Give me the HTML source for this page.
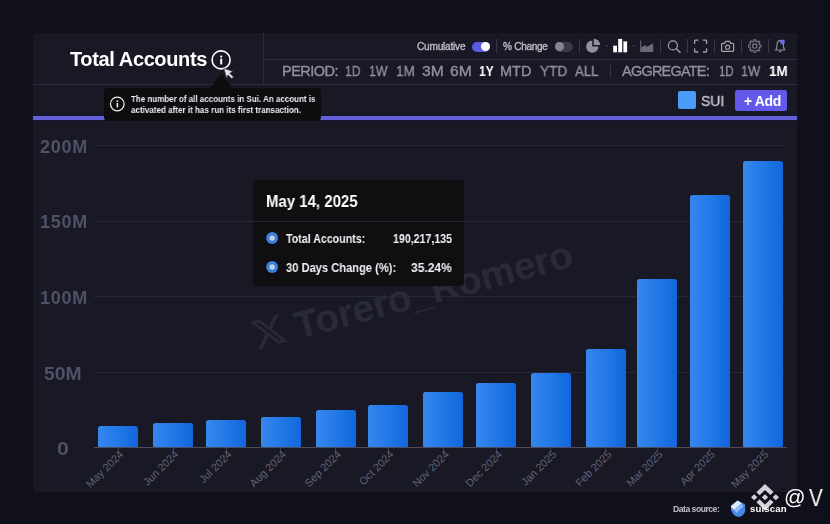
<!DOCTYPE html>
<html><head><meta charset="utf-8">
<style>
*{margin:0;padding:0;box-sizing:border-box}
html,body{width:830px;height:524px;overflow:hidden;background:#10101a;font-family:"Liberation Sans",sans-serif}
.abs{position:absolute}
#panel{position:absolute;left:33px;top:33px;width:764px;height:459px;background:#191925;border-radius:3px}
.hl{position:absolute;height:1px;background:#2b2b3a}
.vl{position:absolute;width:1px;background:#2b2b3a}
.t{position:absolute;white-space:nowrap;line-height:1;transform-origin:0 0;will-change:transform}
.grid{position:absolute;left:94px;width:691px;height:1px;background:#27273a}
.bar{position:absolute;width:40px;border-radius:2.5px 2.5px 1px 1px;background:linear-gradient(90deg,#3787ed 0%,#2077e6 55%,#1166dc 100%)}
.xl{position:absolute;font-size:10.8px;color:#626278;white-space:nowrap;line-height:1;transform-origin:100% 50%;transform:rotate(-45deg)}
.sep{position:absolute;top:39px;width:1px;height:14px;background:#383848}
.dot{position:absolute;width:11.5px;height:11.5px;border-radius:50%;background:#3a76d6}
.dot i{position:absolute;left:3px;top:3px;width:5.5px;height:5.5px;border-radius:50%;background:#c4d6f2}
</style></head><body>
<div id="panel"></div>

<!-- header lines -->
<div class="hl" style="left:33px;top:84px;width:764px"></div>
<div class="hl" style="left:263px;top:59px;width:534px"></div>
<div class="vl" style="left:263px;top:33px;height:51px"></div>

<!-- info icon + cursor -->
<svg class="abs" style="left:208px;top:47px" width="30" height="34" viewBox="208 47 30 34">
  <circle cx="221.1" cy="59.9" r="9" fill="none" stroke="#fff" stroke-width="1.6"/>
  <rect x="220.2" y="58.7" width="2" height="5.7" fill="#fff"/>
  <circle cx="221.2" cy="56.6" r="1.15" fill="#fff"/>
  <path d="M224 68.4 L232.6 71.6 L229.6 73.2 L233.4 77 L231.8 78.6 L228 74.8 L226.6 77.6 Z" fill="#e8e8ec" stroke="#55555f" stroke-width="0.6" stroke-linejoin="round"/>
</svg>

<!-- toolbar row 1 -->
<div class="abs" style="left:472px;top:41.5px;width:18px;height:10px;border-radius:5px;background:#5a5ae4"></div>
<div class="abs" style="left:480.5px;top:42px;width:9px;height:9px;border-radius:50%;background:#fff"></div>
<div class="sep" style="left:496px"></div>
<div class="abs" style="left:555px;top:41.5px;width:18px;height:10px;border-radius:5px;background:#383846"></div>
<div class="abs" style="left:555px;top:42px;width:9px;height:9px;border-radius:50%;background:#868692"></div>
<div class="sep" style="left:579px"></div>
<svg class="abs" style="left:584px;top:36px" width="210" height="20" viewBox="584 36 210 20">
  <!-- pie -->
  <path d="M592.3 40.4 A6.2 6.2 0 1 0 598.5 46.6 L592.3 46.6 Z" fill="#92929e"/>
  <path d="M593.8 38.8 A6.2 6.2 0 0 1 600 45 L593.8 45 Z" fill="#92929e"/>
  <!-- bars -->
  <rect x="613.2" y="45.7" width="3.8" height="6.6" fill="#fff"/>
  <rect x="618.2" y="38.9" width="4" height="13.4" fill="#fff"/>
  <rect x="623.4" y="41.4" width="3.7" height="10.9" fill="#fff"/>
  <circle cx="606.8" cy="46" r="0.7" fill="#555564"/><circle cx="633.6" cy="46" r="0.7" fill="#555564"/>
  <!-- area -->
  <rect x="640.2" y="40.6" width="1" height="11.6" fill="#6e6e7c"/>
  <path d="M641.2 52.1 L641.2 47.6 L645 45.3 L647 46.7 L653.2 43.2 L653.2 52.1 Z" fill="#6a6a78"/>
  <!-- search -->
  <circle cx="672.9" cy="45.4" r="4.5" fill="none" stroke="#a4a4b0" stroke-width="1.2"/>
  <path d="M676.3 48.8 L680.2 52.4" stroke="#a4a4b0" stroke-width="1.3" stroke-linecap="round"/>
  <!-- fullscreen -->
  <path d="M694.6 43.4 V41.2 Q694.6 40.2 695.6 40.2 H697.8 M703.4 40.2 H705.6 Q706.6 40.2 706.6 41.2 V43.4 M706.6 48.8 V51 Q706.6 52 705.6 52 H703.4 M697.8 52 H695.6 Q694.6 52 694.6 51 V48.8" fill="none" stroke="#a4a4b0" stroke-width="1.3" stroke-linecap="round" stroke-linejoin="round"/>
  <!-- camera -->
  <path d="M722.6 43.3 H724.4 L725.7 41.3 H729.5 L730.8 43.3 H732.6 Q733.6 43.3 733.6 44.3 V50.4 Q733.6 51.4 732.6 51.4 H722.6 Q721.6 51.4 721.6 50.4 V44.3 Q721.6 43.3 722.6 43.3 Z" fill="none" stroke="#a4a4b0" stroke-width="1.2" stroke-linejoin="round"/>
  <circle cx="727.6" cy="47.2" r="2.1" fill="none" stroke="#a4a4b0" stroke-width="1.1"/>
  <!-- gear -->
  <path d="M759.45 44.91 L761.02 45.10 L761.02 47.10 L759.45 47.29 L758.93 48.55 L759.91 49.79 L758.49 51.21 L757.25 50.23 L755.99 50.75 L755.80 52.32 L753.80 52.32 L753.61 50.75 L752.35 50.23 L751.11 51.21 L749.69 49.79 L750.67 48.55 L750.15 47.29 L748.58 47.10 L748.58 45.10 L750.15 44.91 L750.67 43.65 L749.69 42.41 L751.11 40.99 L752.35 41.97 L753.61 41.45 L753.80 39.88 L755.80 39.88 L755.99 41.45 L757.25 41.97 L758.49 40.99 L759.91 42.41 L758.93 43.65 Z" fill="none" stroke="#80808e" stroke-width="1.05" stroke-linejoin="round"/>
  <circle cx="754.8" cy="46.1" r="2.2" fill="none" stroke="#80808e" stroke-width="1.05"/>
  <!-- bell -->
  <path d="M775.6 50 C776.8 49 776.9 47.6 776.9 46 C776.9 42.9 778.3 40.6 780.2 40.6 C782.1 40.6 783.5 42.9 783.5 46 C783.5 47.6 783.6 49 784.8 50 Z" fill="none" stroke="#8e8e9a" stroke-width="1.15" stroke-linejoin="round"/>
  <path d="M779 51.2 Q780.2 52.5 781.4 51.2" fill="none" stroke="#8e8e9a" stroke-width="1.1"/>
  <circle cx="782.5" cy="42" r="2.4" fill="#6a6af0"/>
</svg>
<div class="sep" style="left:660px"></div>
<div class="sep" style="left:687px"></div>
<div class="sep" style="left:714px"></div>
<div class="sep" style="left:741px"></div>
<div class="sep" style="left:768px"></div>
<div class="abs" style="left:610px;top:65px;width:1px;height:12px;background:#383848"></div>

<!-- legend row -->
<div class="abs" style="left:677.7px;top:91px;width:18.2px;height:18.3px;border-radius:2px;background:#4a9bf7"></div>
<div class="abs" style="left:735px;top:90px;width:52px;height:21.4px;border-radius:2.5px;background:#6259ea"></div>

<!-- purple line -->
<div class="abs" style="left:33px;top:116.3px;width:764px;height:3.6px;background:#6560d8;box-shadow:0 0 0 0.6px #121238"></div>

<!-- header tooltip -->
<svg class="abs" style="left:208px;top:72px" width="26" height="17" viewBox="208 72 26 17"><path d="M209.5 88.5 L221.5 73 L232.5 88.5 Z" fill="#0d0d10"/></svg>
<div class="abs" style="left:103.5px;top:87.5px;width:217px;height:33.5px;border-radius:4px;background:#0d0d10"></div>
<svg class="abs" style="left:109px;top:96px" width="17" height="17" viewBox="0 0 17 17">
  <circle cx="8.3" cy="8" r="6.8" fill="none" stroke="#f4f4f6" stroke-width="1.2"/>
  <rect x="7.6" y="7" width="1.5" height="4.4" fill="#f4f4f6"/><circle cx="8.35" cy="5.1" r="0.95" fill="#f4f4f6"/>
</svg>

<!-- grid -->
<div class="grid" style="top:145px"></div>
<div class="grid" style="top:220.5px"></div>
<div class="grid" style="top:296px"></div>
<div class="grid" style="top:371.5px"></div>

<!-- watermark -->
<svg class="abs" style="left:230px;top:230px" width="360" height="140" viewBox="230 230 360 140">
 <g fill="#29293a">
  <text transform="rotate(-14.8 301.5 338.4)" x="298.5" y="338.4" font-family="Liberation Sans, sans-serif" font-weight="bold" font-size="38.5">Torero_Romero</text>
  <g transform="translate(269,331.8) rotate(-14.8) scale(1.47) translate(-12.03,-12)">
   <path d="M18.244 2.25h3.308l-7.227 8.26 8.502 11.24H16.17l-5.214-6.817L4.99 21.75H1.68l7.73-8.835L1.254 2.25H8.08l4.713 6.231zm-1.161 17.52h1.833L7.084 4.126H5.117z"/>
  </g>
 </g>
</svg>

<!-- bars -->
<div class="bar" style="left:98px;top:425.5px;height:21.5px"></div>
<div class="bar" style="left:153px;top:423px;height:24px"></div>
<div class="bar" style="left:206px;top:419.9px;height:27.100000000000023px"></div>
<div class="bar" style="left:260.5px;top:417px;height:30px"></div>
<div class="bar" style="left:315.5px;top:410px;height:37px"></div>
<div class="bar" style="left:368px;top:404.5px;height:42.5px"></div>
<div class="bar" style="left:423px;top:391.5px;height:55.5px"></div>
<div class="bar" style="left:476px;top:382.5px;height:64.5px"></div>
<div class="bar" style="left:530.5px;top:372.5px;height:74.5px"></div>
<div class="bar" style="left:585.5px;top:349px;height:98px"></div>
<div class="bar" style="left:637px;top:279px;height:168px"></div>
<div class="bar" style="left:689.5px;top:195px;height:252px"></div>
<div class="bar" style="left:742.5px;top:161px;height:286px"></div>
<div class="abs" style="left:94px;top:447px;width:693px;height:1px;background:#4c4c5c"></div>

<!-- x labels -->
<div class="abs" style="left:117.5px;top:448px;width:1px;height:3.5px;background:#3c3c4c"></div>
<div class="abs" style="left:172.5px;top:448px;width:1px;height:3.5px;background:#3c3c4c"></div>
<div class="abs" style="left:225.5px;top:448px;width:1px;height:3.5px;background:#3c3c4c"></div>
<div class="abs" style="left:280.0px;top:448px;width:1px;height:3.5px;background:#3c3c4c"></div>
<div class="abs" style="left:335.0px;top:448px;width:1px;height:3.5px;background:#3c3c4c"></div>
<div class="abs" style="left:387.5px;top:448px;width:1px;height:3.5px;background:#3c3c4c"></div>
<div class="abs" style="left:442.5px;top:448px;width:1px;height:3.5px;background:#3c3c4c"></div>
<div class="abs" style="left:495.5px;top:448px;width:1px;height:3.5px;background:#3c3c4c"></div>
<div class="abs" style="left:550.0px;top:448px;width:1px;height:3.5px;background:#3c3c4c"></div>
<div class="abs" style="left:605.0px;top:448px;width:1px;height:3.5px;background:#3c3c4c"></div>
<div class="abs" style="left:656.5px;top:448px;width:1px;height:3.5px;background:#3c3c4c"></div>
<div class="abs" style="left:709.0px;top:448px;width:1px;height:3.5px;background:#3c3c4c"></div>
<div class="abs" style="left:762.0px;top:448px;width:1px;height:3.5px;background:#3c3c4c"></div>
<div class="xl" style="right:708.2px;top:447.2px">May 2024</div>
<div class="xl" style="right:653.2px;top:447.2px">Jun 2024</div>
<div class="xl" style="right:600.2px;top:447.2px">Jul 2024</div>
<div class="xl" style="right:545.7px;top:447.2px">Aug 2024</div>
<div class="xl" style="right:490.7px;top:447.2px">Sep 2024</div>
<div class="xl" style="right:438.2px;top:447.2px">Oct 2024</div>
<div class="xl" style="right:383.2px;top:447.2px">Nov 2024</div>
<div class="xl" style="right:330.2px;top:447.2px">Dec 2024</div>
<div class="xl" style="right:275.7px;top:447.2px">Jan 2025</div>
<div class="xl" style="right:220.7px;top:447.2px">Feb 2025</div>
<div class="xl" style="right:169.2px;top:447.2px">Mar 2025</div>
<div class="xl" style="right:116.7px;top:447.2px">Apr 2025</div>
<div class="xl" style="right:63.7px;top:447.2px">May 2025</div>

<!-- chart tooltip -->
<div class="abs" style="left:253px;top:180px;width:210.5px;height:105.7px;border-radius:4px;background:#0f0f11"></div>
<div class="abs" style="left:253px;top:221px;width:210.5px;height:1px;background:#25252d"></div>
<svg class="abs" style="left:264px;top:230px" width="16" height="46" viewBox="264 230 16 46">
  <circle cx="272.1" cy="238.1" r="6" fill="#3a7fdb"/><circle cx="272.1" cy="238.1" r="2.7" fill="#c4cfe6"/>
  <circle cx="272.1" cy="267" r="6" fill="#3a7fdb"/><circle cx="272.1" cy="267" r="2.7" fill="#c4cfe6"/>
</svg>

<!-- footer icons -->
<svg class="abs" style="left:729px;top:499px" width="18" height="19" viewBox="729 499 18 19">
  <path d="M731 505.5 L737.5 500.6 L745 504.2 L745.2 511.5 Q743 516.8 738.2 517 Q732.6 515.8 731 509.5 Z" fill="#4488e4"/>
  <path d="M730.6 506.4 L737.6 500.6 L741.6 503.2 L734 510 Z" fill="#dfe9f8"/>
  <path d="M734 510 L741.6 503.2 L743.4 506.4 L736.4 513 Z" fill="#8db6f0"/>
</svg>
<svg class="abs" style="left:751px;top:484px" width="28" height="26.5" viewBox="0 0 24 24" preserveAspectRatio="none">
  <path fill="#d2d2d8" d="M16.624 13.9202l2.7175 2.7154-7.353 7.353-7.353-7.352 2.7175-2.7164 4.6355 4.6595 4.6356-4.6595zm4.6366-4.6366L24 12l-2.7154 2.7164L18.5682 12l2.6924-2.7164zm-9.272.001l2.7163 2.6914-2.7164 2.7174v-.001L9.2721 12l2.7164-2.7154zm-9.2722-.001L5.4088 12l-2.6914 2.6924L0 12l2.7164-2.7164zM11.9885.0115l7.353 7.329-2.7174 2.7154-4.6356-4.6356-4.6355 4.6595-2.7174-2.7154 7.353-7.353z"/>
</svg>

<!-- texts -->
<div class="t" style="left:69.5px;top:49.0px;font-size:20px;color:#fff;font-weight:bold;letter-spacing:-0.38px">Total Accounts</div>
<div class="t" style="left:417.0px;top:41.5px;font-size:10.1px;color:#bcbcc8;-webkit-text-stroke:0.35px #bcbcc8;letter-spacing:-0.22px">Cumulative</div>
<div class="t" style="left:503.2px;top:41.5px;font-size:10.1px;color:#bcbcc8;-webkit-text-stroke:0.35px #bcbcc8;letter-spacing:-0.31px">% Change</div>
<div class="t" style="left:281.5px;top:64.1px;font-size:14.5px;color:#9090a0;-webkit-text-stroke:0.35px #9090a0;letter-spacing:-0.53px">PERIOD:</div>
<div class="t" style="left:345.2px;top:64.1px;font-size:14.5px;color:#9090a0;-webkit-text-stroke:0.35px #9090a0;transform:scaleX(0.841)">1D</div>
<div class="t" style="left:368.9px;top:64.1px;font-size:14.5px;color:#9090a0;-webkit-text-stroke:0.35px #9090a0;transform:scaleX(0.852)">1W</div>
<div class="t" style="left:396.3px;top:64.1px;font-size:14.5px;color:#9090a0;-webkit-text-stroke:0.35px #9090a0;transform:scaleX(0.939)">1M</div>
<div class="t" style="left:421.5px;top:64.1px;font-size:14.5px;color:#9090a0;-webkit-text-stroke:0.35px #9090a0;transform:scaleX(1.078)">3M</div>
<div class="t" style="left:449.7px;top:64.1px;font-size:14.5px;color:#9090a0;-webkit-text-stroke:0.35px #9090a0;transform:scaleX(1.078)">6M</div>
<div class="t" style="left:478.9px;top:64.1px;font-size:14.5px;color:#fff;font-weight:bold;transform:scaleX(0.831)">1Y</div>
<div class="t" style="left:500.0px;top:64.1px;font-size:14.5px;color:#9090a0;-webkit-text-stroke:0.35px #9090a0">MTD</div>
<div class="t" style="left:539.7px;top:64.1px;font-size:14.5px;color:#9090a0;-webkit-text-stroke:0.35px #9090a0;transform:scaleX(0.941)">YTD</div>
<div class="t" style="left:575.0px;top:64.1px;font-size:14.5px;color:#9090a0;-webkit-text-stroke:0.35px #9090a0;transform:scaleX(0.908)">ALL</div>
<div class="t" style="left:622.3px;top:64.1px;font-size:14.5px;color:#9090a0;-webkit-text-stroke:0.35px #9090a0;letter-spacing:-0.78px">AGGREGATE:</div>
<div class="t" style="left:718.6px;top:64.1px;font-size:14.5px;color:#9090a0;-webkit-text-stroke:0.35px #9090a0;transform:scaleX(0.788)">1D</div>
<div class="t" style="left:741.3px;top:64.1px;font-size:14.5px;color:#9090a0;-webkit-text-stroke:0.35px #9090a0;transform:scaleX(0.881)">1W</div>
<div class="t" style="left:769.1px;top:64.1px;font-size:14.5px;color:#fff;font-weight:bold;transform:scaleX(0.928)">1M</div>
<div class="t" style="left:700.6px;top:93.5px;font-size:14.8px;color:#c4c4d0;-webkit-text-stroke:0.35px #c4c4d0;transform:scaleX(0.943)">SUI</div>
<div class="t" style="left:743.5px;top:94.1px;font-size:14px;color:#fff;font-weight:bold;letter-spacing:-0.38px">+ Add</div>
<div class="t" style="left:130.5px;top:94.1px;font-size:9.6px;color:#ececf2;font-weight:bold;transform:scaleX(0.833)">The number of all accounts in Sui. An account is</div>
<div class="t" style="left:130.5px;top:104.9px;font-size:9.6px;color:#ececf2;font-weight:bold;transform:scaleX(0.839)">activated after it has run its first transaction.</div>
<div class="t" style="left:40.1px;top:137.7px;font-size:18px;color:#505066;font-weight:bold;letter-spacing:0.73px">200M</div>
<div class="t" style="left:39.5px;top:213.3px;font-size:18px;color:#505066;font-weight:bold;letter-spacing:0.77px">150M</div>
<div class="t" style="left:39.5px;top:288.9px;font-size:18px;color:#505066;font-weight:bold;letter-spacing:0.77px">100M</div>
<div class="t" style="left:44.4px;top:364.5px;font-size:18px;color:#505066;font-weight:bold;transform:scaleX(1.07)">50M</div>
<div class="t" style="left:56.8px;top:440.1px;font-size:18px;color:#505066;font-weight:bold;transform:scaleX(1.178)">0</div>
<div class="t" style="left:265.7px;top:193.5px;font-size:16px;color:#fff;font-weight:bold;transform:scaleX(0.936)">May 14, 2025</div>
<div class="t" style="left:286.0px;top:232.9px;font-size:12.5px;color:#f2f2f6;font-weight:bold;transform:scaleX(0.851)">Total Accounts:</div>
<div class="t" style="left:392.5px;top:232.9px;font-size:12.5px;color:#f2f2f6;font-weight:bold;transform:scaleX(0.849)">190,217,135</div>
<div class="t" style="left:286.0px;top:261.7px;font-size:12.5px;color:#f2f2f6;font-weight:bold;transform:scaleX(0.891)">30 Days Change (%):</div>
<div class="t" style="left:410.6px;top:261.7px;font-size:12.5px;color:#f2f2f6;font-weight:bold;transform:scaleX(0.962)">35.24%</div>
<div class="t" style="left:673.0px;top:504.7px;font-size:8.6px;color:#c0c0c8;font-weight:bold;letter-spacing:-0.48px">Data source:</div>
<div class="t" style="left:749.8px;top:504.1px;font-size:9.6px;color:#fff;font-weight:bold;letter-spacing:0.13px">suiscan</div>
<div class="t" style="left:783.9px;top:487.5px;font-size:19.5px;color:#fff;transform:scaleX(1.088)">@</div>
<div class="t" style="left:808.5px;top:486.2px;font-size:24px;color:#fff;transform:scaleX(0.862)">V</div>
</body></html>
